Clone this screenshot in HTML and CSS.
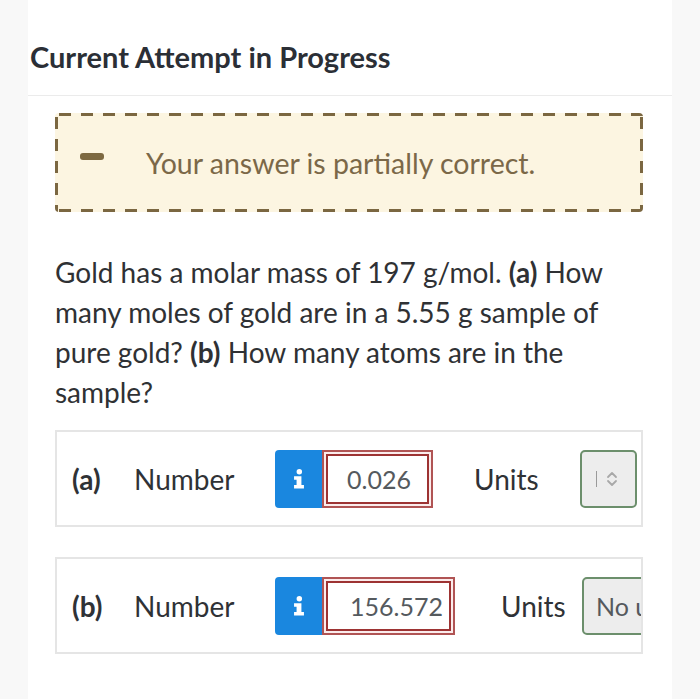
FILE: index.html
```html
<!DOCTYPE html>
<html>
<head>
<meta charset="utf-8">
<link rel="stylesheet" href="styles.css">
</head>
<body>
<div class="panel">
  <div class="header"><h1 class="title">Current Attempt in Progress</h1></div>
  <div class="content">
    <div class="notice">
      <span class="minus"></span>
      <span class="notice-text">Your answer is partially correct.</span>
    </div>
    <p class="question">Gold has a molar mass of 197 g/mol. <b>(a)</b> How many moles of gold are in a 5.55 g sample of pure gold? <b>(b)</b> How many atoms are in the sample?</p>

    <div class="row">
      <span class="part">(a)</span>
      <span class="num-label">Number</span>
      <span class="info"><svg width="12" height="20" viewBox="0 0 11 19"><circle cx="5.8" cy="2.6" r="2.6" fill="#fff"/><path d="M0.8 7 H7.8 V15.2 H10.2 V18.6 H0.8 V15.2 H3.2 V10.3 H0.8 Z" fill="#fff"/></svg></span>
      <span class="answer answer-a">0.026</span>
      <span class="units units-a">Units</span>
      <span class="select select-a"><span class="caret"></span><svg class="chev" width="12" height="16" viewBox="0 0 12 16"><path d="M2 6 L6 2 L10 6 M2 10 L6 14 L10 10" fill="none" stroke="#a8a8a8" stroke-width="1.8" stroke-linecap="round" stroke-linejoin="round"/></svg></span>
    </div>

    <div class="row">
      <span class="part">(b)</span>
      <span class="num-label">Number</span>
      <span class="info"><svg width="12" height="20" viewBox="0 0 11 19"><circle cx="5.8" cy="2.6" r="2.6" fill="#fff"/><path d="M0.8 7 H7.8 V15.2 H10.2 V18.6 H0.8 V15.2 H3.2 V10.3 H0.8 Z" fill="#fff"/></svg></span>
      <span class="answer answer-b">156.572</span>
      <span class="units units-b">Units</span>
      <span class="select select-b">No units</span>
    </div>
  </div>
</div>
</body>
</html>
```

FILE: styles.css
```css
html, body {
  margin: 0;
  padding: 0;
}
body {
  background: #f8f8f8;
  font-family: Lato, "Open Sans", sans-serif;
  color: #2f3236;
}
.panel {
  margin-left: 28px;
  width: 644px;
  min-height: 699px;
  background: #fff;
}
.header {
  padding: 40px 0 21px 2px;
  border-bottom: 1px solid #ebebeb;
}
.title {
  margin: 0;
  font-size: 29px;
  line-height: 34px;
  font-weight: 700;
  color: #2b2f36;
}
.content {
  padding: 0 29px 0 27px;
}
.notice {
  margin-top: 17px;
  height: 99px;
  box-sizing: border-box;
  background-color: #fcf5e1;
  background-image:
    linear-gradient(90deg, #7b6741 55%, transparent 55%),
    linear-gradient(90deg, #7b6741 55%, transparent 55%),
    linear-gradient(180deg, #7b6741 55%, transparent 55%),
    linear-gradient(180deg, #7b6741 55%, transparent 55%);
  background-size: 22px 3px, 22px 3px, 3px 22px, 3px 22px;
  background-position: 4px 0, 4px 100%, 0 4px, 100% 4px;
  background-repeat: repeat-x, repeat-x, repeat-y, repeat-y;
  border-radius: 4px;
  display: flex;
  align-items: center;
  padding-left: 25px;
}
.minus {
  width: 24px;
  height: 7px;
  border-radius: 3px;
  background: #7d6941;
  margin-top: -13px;
}
.notice-text {
  margin-left: 42px;
  font-size: 28.5px;
  color: #7b6848;
}
.question {
  margin: 40px 0 18px 0;
  font-size: 28px;
  line-height: 40px;
  color: #2f3134;
}
.question b {
  font-weight: 700;
}
.row {
  height: 93px;
  border: 2px solid #e5e5e5;
  display: flex;
  align-items: center;
  padding-left: 15px;
  overflow: hidden;
  margin-bottom: 30px;
  font-size: 28px;
  color: #2f3236;
}
.part {
  width: 62px;
  font-weight: 700;
  flex: none;
}
.num-label {
  width: 141px;
  flex: none;
}
.info {
  flex: none;
  width: 47px;
  height: 58px;
  background: #1a87df;
  border-radius: 4px 0 0 4px;
  display: flex;
  align-items: center;
  justify-content: center;
}
.answer {
  flex: none;
  box-sizing: border-box;
  height: 58px;
  border: 2px solid #b05454;
  box-shadow: inset 0 0 0 2px #fbecec, inset 0 0 0 4px #9d3333;
  background: #fff;
  padding-left: 23px;
  display: flex;
  align-items: center;
  overflow: hidden;
  white-space: nowrap;
  font-size: 25px;
  color: #555a5e;
}
.answer-a { width: 111px; }
.answer-b { width: 133px; padding-left: 26px; }
.units {
  flex: none;
}
.units-a { margin-left: 41px; width: 106px; }
.units-b { margin-left: 46px; width: 81px; }
.select {
  flex: none;
  box-sizing: border-box;
  height: 58px;
  border: 2px solid #6c8f6c;
  border-radius: 5px;
  background: #ededed;
  display: flex;
  align-items: center;
  white-space: nowrap;
  font-size: 25px;
  color: #55595d;
}
.select-a {
  width: 57px;
  padding-left: 14px;
}
.caret {
  width: 1px;
  height: 16px;
  background: #9a9a9a;
}
.chev {
  margin-left: 9px;
}
.select-b {
  width: 120px;
  padding-left: 12px;
}
```
